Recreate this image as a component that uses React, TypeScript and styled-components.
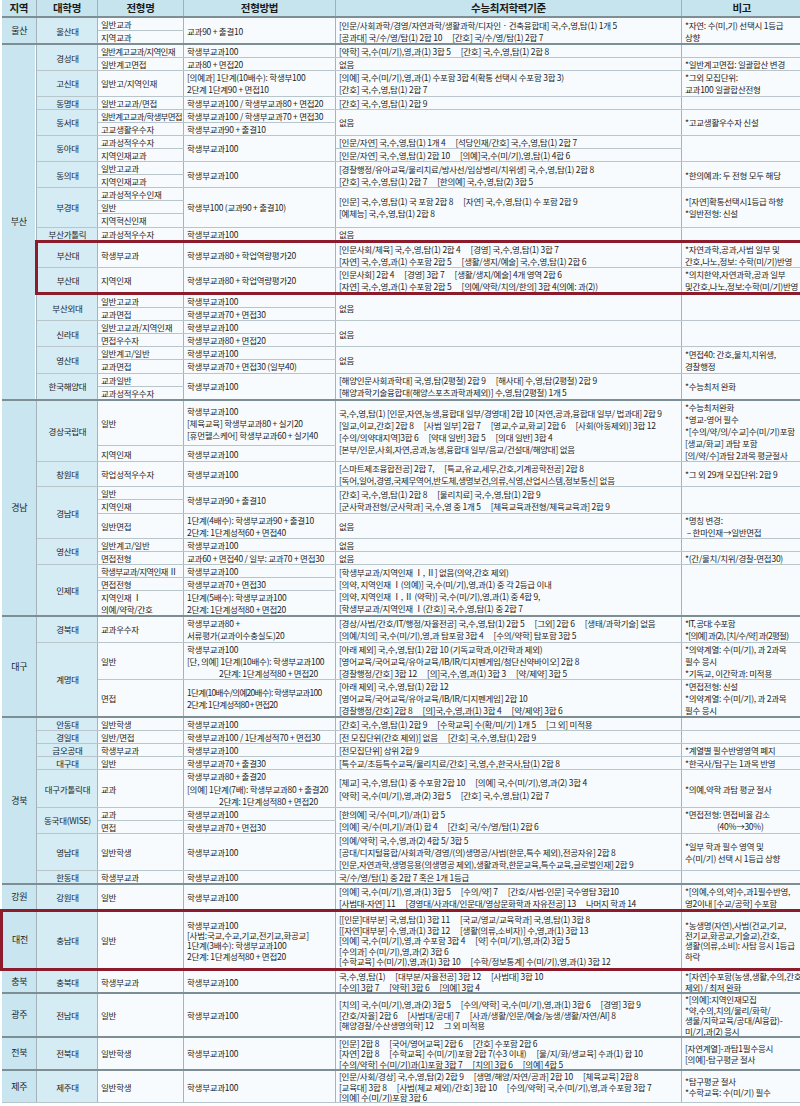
import React from 'react';
import styled, { createGlobalStyle, css } from 'styled-components';

const GlobalStyle = createGlobalStyle`
  html, body {
    margin: 0;
    padding: 0;
    background: #ffffff;
  }
  body {
    font-family: 'Noto Sans CJK KR', 'Noto Sans', sans-serif;
    color: #1e1e1e;
  }
`;

const RED = '#8c1b2b';

const Table = styled.table`
  width: 800px;
  border-collapse: collapse;
  table-layout: fixed;
  font-size: 8.5px;
  letter-spacing: -0.25px;
  line-height: 12.1px;
`;

const Col = styled.col<{ $w: number }>`
  width: ${(p) => p.$w}px;
`;

const Th = styled.th`
  background: #c6e4ee;
  font-size: 10.5px;
  font-weight: 700;
  letter-spacing: -0.3px;
  color: #1a1a1a;
  height: 16px;
  padding: 0;
  border-left: 1px solid #9fb0b7;
  border-bottom: 2px solid #7d8e95;
  &:first-child {
    border-left: none;
  }
`;

type Kind = 'region' | 'univ' | 'body';
type Edge = { top?: boolean; bottom?: boolean; left?: boolean; right?: boolean };

const kindBg: Record<Kind, string> = {
  region: '#c9e6f0',
  univ: '#d5ecf4',
  body: '#f7fbfd',
};

const sepLine = ['1px solid #b8c5ca', '1px solid #8c9da4', '2px solid #7d8e95'];

const Td = styled.td<{ $kind: Kind; $sep: number; $hl: Edge; $dense: boolean; $narrow: boolean }>`
  padding: 0 2px 0 3px;
  vertical-align: middle;
  white-space: nowrap;
  overflow: hidden;
  background: ${(p) => kindBg[p.$kind]};
  text-align: ${(p) => (p.$kind === 'body' ? 'left' : 'center')};
  font-size: ${(p) => (p.$kind === 'region' ? '9px' : 'inherit')};
  line-height: ${(p) => (p.$dense ? '10.4px' : 'inherit')};
  letter-spacing: ${(p) => (p.$narrow ? '-0.7px' : 'inherit')};
  border-left: 1px solid #a4b4ba;
  border-right: 1px solid #a4b4ba;
  border-top: ${(p) => sepLine[p.$sep]};
  border-bottom: 1px solid #b8c5ca;
  ${(p) => p.$hl.top && css`border-top: 3px solid ${RED};`}
  ${(p) => p.$hl.bottom && css`border-bottom: 3px solid ${RED};`}
  ${(p) => p.$hl.left && css`border-left: 3px solid ${RED};`}
  ${(p) => p.$hl.right && css`border-right: 3px solid ${RED};`}
  &:first-child {
    border-left: ${(p) => (p.$hl.left ? `3px solid ${RED}` : 'none')};
  }
`;

const Clip = styled.div<{ $h: number }>`
  height: ${(p) => p.$h}px;
  overflow: hidden;
  display: flex;
  flex-direction: column;
  justify-content: center;
`;

const Line = styled.div<{ $indent: boolean }>`
  padding-left: ${(p) => (p.$indent ? '32px' : '0')};
`;

const Seg = styled.span`
  & + & {
    margin-left: 10px;
  }
`;

type Cell = { t: string; rs?: number; clip?: number; narrow?: boolean };
type Row = {
  region?: [string, number];
  univ?: [string, number];
  start?: boolean;
  hl?: 'top' | 'bottom' | 'both';
  dense?: boolean;
  cells: Cell[];
};

const rows: Row[] = [
  // 울산
  {
    region: ['울산', 2], univ: ['울산대', 2], start: true,
    cells: [
      { t: '일반교과' },
      { t: '교과90 + 출결10', rs: 2 },
      { t: '[인문/사회과학/경영/자연과학/생활과학/디자인 · 건축융합대] 국,수,영,탐(1) 1개 5\n[공과대] 국/수/영/탐(1) 2합 10|[간호] 국/수/영/탐(1) 2합 7', rs: 2 },
      { t: '*자연: 수(미,기) 선택시 1등급\n상향', rs: 2 },
    ],
  },
  { cells: [{ t: '지역교과' }] },
  // 부산
  {
    region: ['부산', 24], univ: ['경성대', 2], start: true,
    cells: [
      { t: '일반계고교과/지역인재', narrow: true },
      { t: '학생부교과100' },
      { t: '[약학] 국,수(미/기),영,과(1) 3합 5|[간호] 국,수,영,탐(1) 2합 8' },
      { t: '' },
    ],
  },
  { cells: [{ t: '일반계고면접' }, { t: '교과80 + 면접20' }, { t: '없음' }, { t: '*일반계고면접: 일괄합산 변경' }] },
  {
    univ: ['고신대', 1], start: true,
    cells: [
      { t: '일반고/지역인재' },
      { t: '[의예과] 1단계(10배수): 학생부100\n2단계 1단계90 + 면접10' },
      { t: '[의예] 국,수(미/기),영,과(1) 수포함 3합 4(확통 선택시 수포함 3합 3)\n[간호] 국,수,영,탐(1) 2합 7' },
      { t: '*그외 모집단위:\n교과100 일괄합산전형' },
    ],
  },
  {
    univ: ['동명대', 1], start: true,
    cells: [{ t: '일반고교과/면접' }, { t: '학생부교과100 / 학생부교과80 + 면접20' }, { t: '[간호] 국,수,영,탐(1) 2합 9' }, { t: '' }],
  },
  {
    univ: ['동서대', 2], start: true,
    cells: [
      { t: '일반계고교과/학생부면접', narrow: true },
      { t: '학생부교과100 / 학생부교과70 + 면접30' },
      { t: '없음', rs: 2 },
      { t: '*고교생활우수자 신설', rs: 2 },
    ],
  },
  { cells: [{ t: '고교생활우수자' }, { t: '학생부교과90 + 출결10' }] },
  {
    univ: ['동아대', 2], start: true,
    cells: [
      { t: '교과성적우수자' },
      { t: '학생부교과100', rs: 2 },
      { t: '[인문/자연] 국,수,영,탐(1) 1개 4|[석당인재/간호] 국,수,영,탐(1) 2합 7' },
      { t: '', rs: 2 },
    ],
  },
  { cells: [{ t: '지역인재교과' }, { t: '[인문/자연] 국,수,영,탐(1) 2합 10|[의예]국,수(미/기),영,탐(1) 4합 6' }] },
  {
    univ: ['동의대', 2], start: true,
    cells: [
      { t: '일반고교과' },
      { t: '학생부교과100', rs: 2 },
      { t: '[경찰행정/유아교육/물리치료/방사선/임상병리/치위생] 국,수,영,탐(1) 2합 8\n[간호] 국,수,영,탐(1) 2합 7|[한의예] 국,수,영,탐(2) 3합 5', rs: 2 },
      { t: '*한의예과: 두 전형 모두 해당', rs: 2 },
    ],
  },
  { cells: [{ t: '지역인재교과' }] },
  {
    univ: ['부경대', 3], start: true,
    cells: [
      { t: '교과성적우수인재' },
      { t: '학생부100 (교과90 + 출결10)', rs: 3 },
      { t: '[인문] 국,수,영,탐(1) 국 포함 2합 8|[자연] 국,수,영,탐(1) 수 포함 2합 9\n[예체능] 국,수,영,탐(1) 2합 8', rs: 3 },
      { t: '*[자연]확통선택시1등급 하향\n*일반전형: 신설', rs: 3 },
    ],
  },
  { cells: [{ t: '일반' }] },
  { cells: [{ t: '지역혁신인재' }] },
  {
    univ: ['부산가톨릭', 1], start: true,
    cells: [{ t: '교과성적우수자' }, { t: '학생부교과100' }, { t: '없음' }, { t: '' }],
  },
  {
    univ: ['부산대', 1], start: true, hl: 'top',
    cells: [
      { t: '학생부교과' },
      { t: '학생부교과80 + 학업역량평가20' },
      { t: '[인문사회/체육] 국,수,영,탐(1) 2합 4|[경영] 국,수,영,탐(1) 3합 7\n[자연] 국,수,영,과(1) 수포함 2합 5|[생활/생지/예술] 국,수,영,탐(1)  2합 6' },
      { t: '*자연과학,공과,사범 일부 및\n간호,나노,정보: 수학(미/기)반영' },
    ],
  },
  {
    univ: ['부산대', 1], start: true, hl: 'bottom',
    cells: [
      { t: '지역인재' },
      { t: '학생부교과80 + 학업역량평가20' },
      { t: '[인문사회] 2합 4|[경영] 3합 7|[생활/생지/예술] 4개 영역 2합 6\n[자연] 국,수,영,과(1) 수포함 2합 5|[의예/약학/치의/한의] 3합 4(의예: 과(2))' },
      { t: '*의치한약,자연과학,공과 일부\n및간호,나노,정보:수학(미/기)반영' },
    ],
  },
  {
    univ: ['부산외대', 2], start: true,
    cells: [{ t: '일반고교과' }, { t: '학생부교과100' }, { t: '없음', rs: 2 }, { t: '', rs: 2 }],
  },
  { cells: [{ t: '교과면접' }, { t: '학생부교과70 + 면접30' }] },
  {
    univ: ['신라대', 2], start: true,
    cells: [{ t: '일반고교과/지역인재' }, { t: '학생부교과100' }, { t: '없음', rs: 2 }, { t: '', rs: 2 }],
  },
  { cells: [{ t: '면접우수자' }, { t: '학생부교과80 + 면접20' }] },
  {
    univ: ['영산대', 2], start: true,
    cells: [{ t: '일반계고/일반' }, { t: '학생부교과100' }, { t: '없음', rs: 2 }, { t: '*면접40: 간호,물치,치위생,\n경찰행정', rs: 2 }],
  },
  { cells: [{ t: '교과면접' }, { t: '학생부교과70 + 면접30 (일부40)' }] },
  {
    univ: ['한국해양대', 2], start: true,
    cells: [
      { t: '교과일반' },
      { t: '학생부교과100', rs: 2 },
      { t: '[해양인문사회과학대] 국,영,탐(2평철) 2합 9|[해사대] 수,영,탐(2평철) 2합 9\n[해양과학기술융합대(해양스포츠과학과제외)] 수,영,탐(2평철) 1개 5', rs: 2 },
      { t: '*수능최저 완화', rs: 2 },
    ],
  },
  { cells: [{ t: '교과성적우수자' }] },
  // 경남
  {
    region: ['경남', 11], univ: ['경상국립대', 2], start: true,
    cells: [
      { t: '일반' },
      { t: '학생부교과100\n[체육교육] 학생부교과80 + 실기20\n[휴먼헬스케어] 학생부교과60 + 실기40' },
      { t: '국,수,영,탐(1) [인문,자연,농생,융합대 일부/경영대] 2합 10  [자연,공과,융합대 일부/ 법과대] 2합 9\n[일교,이교,간호] 2합 8|[사범 일부] 2합 7|[영교,수교,화교] 2합 6|[사회(아동제외)] 3합 12\n[수의/의약대지역]3합 6|[약대 일반] 3합 5|[의대 일반] 3합 4\n[본부/인문,사회,자연,공과,농생,융합대 일부/음교/건설대/해양대] 없음', rs: 2 },
      { t: '*수능최저완화\n*영교-영어 필수\n*[수의/약/의/수교]수(미/기)포함\n[생교/화교] 과탐 포함\n[의/약/수]과탐 2과목 평균절사', rs: 2 },
    ],
  },
  { cells: [{ t: '지역인재' }, { t: '학생부교과100' }] },
  {
    univ: ['창원대', 1], start: true,
    cells: [
      { t: '학업성적우수자' },
      { t: '학생부교과100' },
      { t: '[스마트제조융합전공] 2합 7,|[특교,유교,세무,간호,기계공학전공] 2합 8\n[독어,일어,경영,국제무역어,반도체,생명보건,의류,식영,산업시스템,정보통신] 없음' },
      { t: '*그 외 29개 모집단위: 2합 9' },
    ],
  },
  {
    univ: ['경남대', 3], start: true,
    cells: [
      { t: '일반' },
      { t: '학생부교과90 + 출결10', rs: 2 },
      { t: '[간호] 국,수,영,탐(1)  2합 8|[물리치료] 국,수,영,탐(1) 2합 9\n[군사학과전형/군사학과] 국,수,영 중 1개 5|[체육교육과전형/체육교육과] 2합 9', rs: 2 },
      { t: '', rs: 2 },
    ],
  },
  { cells: [{ t: '지역인재' }] },
  {
    cells: [
      { t: '일반면접' },
      { t: '1단계(4배수): 학생부교과90 + 출결10\n2단계: 1단계성적60 + 면접40' },
      { t: '없음' },
      { t: '*명칭 변경:\n\u00a0– 한마인재→일반면접' },
    ],
  },
  {
    univ: ['영산대', 2], start: true,
    cells: [{ t: '일반계고/일반' }, { t: '학생부교과100' }, { t: '없음' }, { t: '' }],
  },
  { cells: [{ t: '면접전형' }, { t: '교과60 + 면접40 / 일부: 교과70 + 면접30' }, { t: '없음' }, { t: '*(간/물치/치위/경찰-면접30)' }] },
  {
    univ: ['인제대', 3], start: true,
    cells: [
      { t: '학생부교과/지역인재 Ⅱ', narrow: true },
      { t: '학생부교과100' },
      { t: '[학생부교과/지역인재 Ⅰ, Ⅱ] 없음(의약,간호 제외)\n[의약, 지역인재 Ⅰ(의예)] 국,수(미/기),영,과(1) 중 각 2등급 이내\n[의약, 지역인재 Ⅰ, Ⅱ (약학)] 국,수(미/기),영,과(1) 중 4합 9,\n[학생부교과/지역인재 Ⅰ(간호)] 국,수,영,탐(1) 중 2합 7', rs: 3 },
      { t: '', rs: 3 },
    ],
  },
  { cells: [{ t: '면접전형' }, { t: '학생부교과70 + 면접30' }] },
  { cells: [{ t: '지역인재 Ⅰ\n의예/약학/간호' }, { t: '1단계(5배수): 학생부교과100\n2단계: 1단계성적80 + 면접20' }] },
  // 대구
  {
    region: ['대구', 3], univ: ['경북대', 1], start: true,
    cells: [
      { t: '교과우수자' },
      { t: '학생부교과80 +\n서류평가(교과이수충실도)20' },
      { t: '[경상/사범/간호/IT/행정/자율전공] 국,수,영,탐(1) 2합 5|[그외] 2합 6|[생태/과학기술] 없음\n[의예/치의] 국,수(미/기),영,과 탐포함 3합 4|[수의/약학] 탐포함 3합 5' },
      { t: '*IT, 공대: 수포함\n*[의예] 과(2), [치/수/약] 과(2평절)', narrow: true },
    ],
  },
  {
    univ: ['계명대', 2], start: true,
    cells: [
      { t: '일반' },
      { t: '학생부교과100\n[단, 의예] 1단계(10배수): 학생부교과100\n»2단계: 1단계성적80 + 면접20' },
      { t: '[아래 제외] 국,수,영,탐(1) 2합 10 (기독교학과,이간학과 제외)\n[영어교육/국어교육/유아교육/IB/IR/디지펜게임/첨단신약바이오] 2합 8\n[경찰행정/간호] 3합 12|[의]국,수,영,과(1) 3합 3|[약/제약] 3합 5' },
      { t: '*의약계열: 수(미/기), 과 2과목\n필수 응시\n*기독교, 이간학과: 미적용' },
    ],
  },
  {
    cells: [
      { t: '면접' },
      { t: '1단계(10배수/의예20배수): 학생부교과100\n2단계: 1단계성적80 + 면접20', narrow: true },
      { t: '[아래 제외] 국,수,영,탐(1) 2합 12\n[영어교육/국어교육/유아교육/IB/IR/디지펜게임] 2합 10\n[경찰행정/간호] 2합 8|[의]국,수,영,과(1) 3합 4|[약/제약] 3합 6' },
      { t: '*면접전형: 신설\n*의약계열: 수(미/기), 과 2과목\n필수 응시' },
    ],
  },
  // 경북
  {
    region: ['경북', 9], univ: ['안동대', 1], start: true,
    cells: [
      { t: '일반학생' },
      { t: '학생부교과100' },
      { t: '[간호] 국,수,영,탐(1) 2합 9|[수학교육] 수(확/미/기) 1개 5|[그 외] 미적용' },
      { t: '' },
    ],
  },
  {
    univ: ['경일대', 1], start: true,
    cells: [
      { t: '일반/면접' },
      { t: '학생부교과100 / 1단계성적70 + 면접30' },
      { t: '[전 모집단위(간호 제외)] 없음|[간호] 국,수,영,탐(1) 2합 9' },
      { t: '' },
    ],
  },
  {
    univ: ['금오공대', 1], start: true,
    cells: [{ t: '학생부교과' }, { t: '학생부교과100' }, { t: '[전모집단위] 상위 2합 9' }, { t: '*계열별 필수반영영역 폐지' }],
  },
  {
    univ: ['대구대', 1], start: true,
    cells: [
      { t: '일반' },
      { t: '학생부교과70 + 출결30' },
      { t: '[특수교/초등특수교육/물리치료/간호] 국,영,수,한국사,탐(1) 2합 8' },
      { t: '*한국사/탐구는 1과목 반영' },
    ],
  },
  {
    univ: ['대구가톨릭대', 1], start: true,
    cells: [
      { t: '교과' },
      { t: '학생부교과80 + 출결20\n[의예] 1단계(7배): 학생부교과80 + 출결20\n»2단계: 1단계성적80 + 면접20' },
      { t: '[체교] 국,수,영,탐(1) 중 수포함 2합 10|[의예] 국,수(미/기),영,과(2) 3합 4\n[약학] 국,수(미/기),영,과(2) 3합 5|[간호] 국,수,영,탐(1) 2합 7' },
      { t: '*의예,약학 과탐 평균 절사' },
    ],
  },
  {
    univ: ['동국대(WISE)', 2], start: true,
    cells: [
      { t: '교과' },
      { t: '학생부교과100' },
      { t: '[한의예] 국/수(미,기)/과(1) 합 5\n[의예] 국/수(미,기)/과(1) 합 4|[간호] 국/수/영/탐(1) 2합 6', rs: 2 },
      { t: '*면접전형: 면접비율 감소\n»(40%→30%)', rs: 2 },
    ],
  },
  { cells: [{ t: '면접' }, { t: '학생부교과70 + 면접30' }] },
  {
    univ: ['영남대', 1], start: true,
    cells: [
      { t: '일반학생' },
      { t: '학생부교과100' },
      { t: '[의예/약학] 국,수,영,과(2) 4합 5/ 3합 5\n[공대/디지털융합/사회과학/경영/(의)생명공/사범(한문,특수 제외),전공자유] 2합 8\n[인문,자연과학,생명응용(의생명공 제외),생활과학,한문교육,특수교육,글로벌인재] 2합 9' },
      { t: '*일부 학과 필수 영역 및\n수(미/기) 선택 시 1등급 상향' },
    ],
  },
  {
    univ: ['한동대', 1], start: true,
    cells: [{ t: '학생부교과' }, { t: '학생부교과100' }, { t: '국/수/영/탐(1) 중 2합 7 혹은 1개 1등급' }, { t: '' }],
  },
  // 강원
  {
    region: ['강원', 1], univ: ['강원대', 1], start: true,
    cells: [
      { t: '일반' },
      { t: '학생부교과100' },
      { t: '[의예] 국,수(미/기),영,과(1) 3합 5|[수의/약] 7|[간호/사범-인문] 국수영탐 3합10\n[사범대-자연] 11|[경영대/사과대/인문대/영상문화학과 자유전공] 13|나머지 학과 14' },
      { t: '*[의예,수의,약]수,과1필수반영,\n영2이내 [수교/공학] 수포함' },
    ],
  },
  // 대전
  {
    region: ['대전', 1], univ: ['충남대', 1], start: true, hl: 'both', dense: true,
    cells: [
      { t: '일반' },
      { t: '학생부교과100\n[사범:국교,수교,기교,전기교,화공교]\n1단계(3배수): 학생부교과100\n2단계: 1단계성적80 + 면접20' },
      { t: '[[인문]대부분] 국,영,탐(1) 3합 11|[국교/영교/교육학과] 국,영,탐(1) 3합 8\n[[자연]대부분] 수,영,과(1) 3합 12|[생활(의류,소비자)] 수,영,과(1) 3합 13\n[의예] 국,수(미/기),영,과 수포함 3합 4|[약] 수(미/기),영,과(2) 3합 5\n[수의과] 수(미/기),영,과(2) 3합 6\n[수학교육] 수(미/기),영,과(1) 3합 10|[수학/정보통계] 수(미/기),영,과(1) 3합 12', clip: 56 },
      { t: '*농생명(자연),사범(건교,기교,\n전기교,화공교,기술교),간호,\n생활(의류,소비): 사탐 응시 1등급\n하락' },
    ],
  },
  // 충북
  {
    region: ['충북', 1], univ: ['충북대', 1], start: true, dense: true,
    cells: [
      { t: '학생부교과' },
      { t: '학생부교과100' },
      { t: '국,수,영,탐(1)|[대부분/자율전공] 3합 12|[사범대] 3합 10\n[수의] 3합 7|[약학] 3합 6|[의예] 3합 4' },
      { t: '*[자연]수포함(농생,생활,수의,간호\n제외) / 최저 완화' },
    ],
  },
  // 광주
  {
    region: ['광주', 1], univ: ['전남대', 1], start: true, dense: true,
    cells: [
      { t: '일반' },
      { t: '학생부교과100' },
      { t: '[치의] 국,수(미/기),영,과(2) 3합 5|[수의/약학] 국,수(미/기),영,과(1) 3합 6|[경영] 3합 9\n[간호/자율] 2합 6|[사범대/공대] 7|[사과/생활/인문/예술/농생/생활/자연/AI] 8\n[해양경찰/수산생명의학] 12|그 외 미적용' },
      { t: '*[의예]:지역인재모집\n*약,수의,치의/물리/화학/\n생물/지학교육/공대/AI융합)-\n미/기,과(2) 응시' },
    ],
  },
  // 전북
  {
    region: ['전북', 1], univ: ['전북대', 1], start: true, dense: true,
    cells: [
      { t: '일반학생' },
      { t: '학생부교과100' },
      { t: '[인문] 2합 8|[국어/영어교육] 2합 6|[간호] 수포함 2합 6\n[자연] 2합 8|[수학교육] 수(미/기)포함 2합 7(수3 이내)|[물/지/화/생교육] 수과(1) 합 10\n[수의/약학] 수(미/기)과(1)포함 3합 7|[치의] 3합 6|[의예] 4합 5' },
      { t: '[자연계열]-과탐1필수응시\n[의예]-탐구평균 절사' },
    ],
  },
  // 제주
  {
    region: ['제주', 1], univ: ['제주대', 1], start: true, dense: true,
    cells: [
      { t: '일반학생' },
      { t: '학생부교과100' },
      { t: '[인문/사회/경상] 국,수,영,탐(2) 2합 9|[생명/해양/자연/공과] 2합 10|[체육교육] 2합 8\n[교육대] 3합 8|[사범(체교 제외)/간호] 3합 10|[수의/약학] 국,수(미/기),영,과 수포함 3합 7\n[의예] 수(미/기)포함 3합 6' },
      { t: '*탐구평균 절사\n*수학교육: 수(미/기) 필수' },
    ],
  },
];

const headers = ['지역', '대학명', '전형명', '전형방법', '수능최저학력기준', '비고'];
const widths = [35, 61, 86, 152, 346, 120];

const CellText: React.FC<{ t: string }> = ({ t }) => (
  <>
    {t
      ? t.split('\n').map((line, i) => {
          const indent = line.startsWith('»');
          const body = indent ? line.slice(1) : line;
          return (
            <Line key={i} $indent={indent}>
              {body.split('|').map((seg, j) => (
                <Seg key={j}>{seg}</Seg>
              ))}
            </Line>
          );
        })
      : null}
  </>
);

type Flat = { kind: Kind; t: string; rs?: number; clip?: number; narrow?: boolean };

const App: React.FC = () => {
  return (
    <>
      <GlobalStyle />
      <Table>
        <colgroup>
          {widths.map((w, i) => (
            <Col key={i} $w={w} />
          ))}
        </colgroup>
        <thead>
          <tr>
            {headers.map((h) => (
              <Th key={h}>{h}</Th>
            ))}
          </tr>
        </thead>
        <tbody>
          {rows.map((row, ri) => {
            const sep = row.region ? 2 : row.start ? 1 : 0;
            const top = row.hl === 'top' || row.hl === 'both';
            const bottom = row.hl === 'bottom' || row.hl === 'both';
            const all: Flat[] = [];
            if (row.region) all.push({ kind: 'region', t: row.region[0], rs: row.region[1] });
            if (row.univ) all.push({ kind: 'univ', t: row.univ[0], rs: row.univ[1] });
            row.cells.forEach((c) => all.push({ kind: 'body', ...c }));
            return (
              <tr key={ri}>
                {all.map((c, ci) => (
                  <Td
                    key={ci}
                    rowSpan={c.rs && c.rs > 1 ? c.rs : undefined}
                    $kind={c.kind}
                    $sep={sep}
                    $dense={!!row.dense}
                    $narrow={!!c.narrow}
                    $hl={
                      row.hl
                        ? { top, bottom, left: ci === 0, right: ci === all.length - 1 }
                        : {}
                    }
                  >
                    {c.clip ? (
                      <Clip $h={c.clip}>
                        <CellText t={c.t} />
                      </Clip>
                    ) : (
                      <CellText t={c.t} />
                    )}
                  </Td>
                ))}
              </tr>
            );
          })}
        </tbody>
      </Table>
    </>
  );
};

export default App;
